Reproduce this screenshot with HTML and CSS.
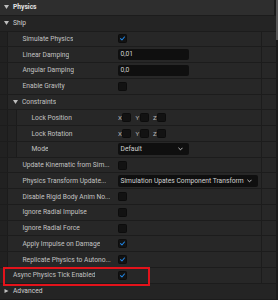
FILE: index.html
```html
<!DOCTYPE html>
<html>
<head>
<meta charset="utf-8">
<link rel="stylesheet" href="styles.css">
</head>
<body>
<div class="panel">
  <div class="content">
    <div class="row cat"><svg class="tri" viewBox="0 0 5 4"><polygon points="0,0 5,0 2.5,4"/></svg><span>Physics</span></div>
    <div class="row group"><svg class="tri" viewBox="0 0 5 4"><polygon points="0,0 5,0 2.5,4"/></svg><span>Ship</span></div>

    <div class="prop">
      <div class="name-cell"><div class="band"></div><span class="label">Simulate Physics</span></div>
      <div class="val"><span class="cb"><svg viewBox="0 0 9 9"><polyline points="2,4.7 3.8,6.4 7,2.6"/></svg></span></div>
      <div class="reset"></div>
    </div>
    <div class="prop">
      <div class="name-cell"><div class="band"></div><span class="label">Linear Damping</span></div>
      <div class="val"><span class="input">0,01</span></div>
      <div class="reset"></div>
    </div>
    <div class="prop">
      <div class="name-cell"><div class="band"></div><span class="label">Angular Damping</span></div>
      <div class="val"><span class="input">0,0</span></div>
      <div class="reset"></div>
    </div>
    <div class="prop">
      <div class="name-cell"><div class="band"></div><span class="label">Enable Gravity</span></div>
      <div class="val"><span class="cb"></span></div>
      <div class="reset"></div>
    </div>
    <div class="prop">
      <div class="name-cell"><div class="band"></div><span class="label sub"><svg class="tri" viewBox="0 0 5 4"><polygon points="0,0 5,0 2.5,4"/></svg>Constraints</span></div>
      <div class="val"></div>
      <div class="reset"></div>
    </div>
    <div class="prop">
      <div class="name-cell"><div class="band"></div><div class="band band2"></div><span class="label">Lock Position</span></div>
      <div class="val"><span class="axis">X</span><span class="cb"></span><span class="axis ax-gap">Y</span><span class="cb"></span><span class="axis ax-gap">Z</span><span class="cb"></span></div>
      <div class="reset"></div>
    </div>
    <div class="prop">
      <div class="name-cell"><div class="band"></div><div class="band band2"></div><span class="label">Lock Rotation</span></div>
      <div class="val"><span class="axis">X</span><span class="cb"></span><span class="axis ax-gap">Y</span><span class="cb"></span><span class="axis ax-gap">Z</span><span class="cb"></span></div>
      <div class="reset"></div>
    </div>
    <div class="prop">
      <div class="name-cell"><div class="band"></div><div class="band band2"></div><span class="label">Mode</span></div>
      <div class="val"><span class="combo"><span>Default</span><svg class="chev" viewBox="0 0 6 4"><polyline points="0.5,0.5 3,3 5.5,0.5"/></svg></span></div>
      <div class="reset"></div>
    </div>
    <div class="prop">
      <div class="name-cell"><div class="band"></div><span class="label">Update Kinematic from Sim...</span></div>
      <div class="val"><span class="cb"></span></div>
      <div class="reset"></div>
    </div>
    <div class="prop">
      <div class="name-cell"><div class="band"></div><span class="label">Physics Transform Update...</span></div>
      <div class="val"><span class="combo wide"><span>Simulation Upates Component Transform</span><svg class="chev" viewBox="0 0 6 4"><polyline points="0.5,0.5 3,3 5.5,0.5"/></svg></span></div>
      <div class="reset"></div>
    </div>
    <div class="prop">
      <div class="name-cell"><div class="band"></div><span class="label">Disable Rigid Body Anim No...</span></div>
      <div class="val"><span class="cb"></span></div>
      <div class="reset"></div>
    </div>
    <div class="prop">
      <div class="name-cell"><div class="band"></div><span class="label">Ignore Radial Impulse</span></div>
      <div class="val"><span class="cb"></span></div>
      <div class="reset"></div>
    </div>
    <div class="prop">
      <div class="name-cell"><div class="band"></div><span class="label">Ignore Radial Force</span></div>
      <div class="val"><span class="cb"></span></div>
      <div class="reset"></div>
    </div>
    <div class="prop">
      <div class="name-cell"><div class="band"></div><span class="label">Apply Impulse on Damage</span></div>
      <div class="val"><span class="cb"><svg viewBox="0 0 9 9"><polyline points="2,4.7 3.8,6.4 7,2.6"/></svg></span></div>
      <div class="reset"></div>
    </div>
    <div class="prop">
      <div class="name-cell"><div class="band"></div><span class="label">Replicate Physics to Autono...</span></div>
      <div class="val"><span class="cb"><svg viewBox="0 0 9 9"><polyline points="2,4.7 3.8,6.4 7,2.6"/></svg></span></div>
      <div class="reset"></div>
    </div>
    <div class="prop">
      <div class="name-cell"><span class="label top">Async Physics Tick Enabled</span></div>
      <div class="val"><span class="cb"><svg viewBox="0 0 9 9"><polyline points="2,4.7 3.8,6.4 7,2.6"/></svg></span></div>
      <div class="reset"></div>
    </div>
    <div class="row group"><svg class="tri" viewBox="0 0 5 4"><polygon points="0.5,0 4.5,2 0.5,4"/></svg><span>Advanced</span></div>
  </div>
  <div class="scroll"><div class="thumb"></div></div>
  <div class="highlight"></div>
</div>
</body>
</html>
```

FILE: styles.css
```css
html, body {
  margin: 0;
  padding: 0;
  background: #1b1b1b;
}

body {
  font-family: Roboto, "Liberation Sans", sans-serif;
  font-size: 6.7px;
  color: #c2c2c2;
  overflow: hidden;
}

.panel {
  position: relative;
  display: flex;
  width: 278px;
  height: 300px;
  overflow: hidden;
}

.content {
  width: 276px;
  flex: none;
}

.scroll {
  width: 2px;
  flex: none;
  background: #1b1b1b;
}

.thumb {
  height: 40px;
  background: #575757;
}

.row {
  height: 15.78px;
  box-sizing: border-box;
  border-bottom: 1px solid #1c1c1c;
  display: flex;
  align-items: center;
  padding-left: 4px;
}

.tri {
  width: 5px;
  height: 4px;
  margin-right: 4px;
  flex: none;
  fill: #bdbdbd;
}

.cat {
  background: #2e2e2e;
  margin-right: 2px;
  color: #e4e4e4;
  font-weight: 700;
}

.group {
  background: #242424;
  color: #cfcfcf;
}

.prop {
  height: 15.78px;
  box-sizing: border-box;
  border-bottom: 1px solid #1c1c1c;
  background: #272727;
  display: grid;
  grid-template-columns: 115px 146px 1fr;
}

.name-cell {
  display: flex;
  align-items: center;
  min-width: 0;
  overflow: hidden;
}

.band {
  width: 8px;
  align-self: stretch;
  flex: none;
  box-sizing: border-box;
  background: #212121;
  border-right: 1px solid #1b1b1b;
}

.band2 {
  width: 9px;
  background: #232323;
}

.label {
  padding-left: 14.5px;
  white-space: nowrap;
  overflow: hidden;
}

.label.sub {
  padding-left: 5px;
  display: flex;
  align-items: center;
}

.label.top {
  padding-left: 13px;
}

.val {
  display: flex;
  align-items: center;
  padding-left: 3px;
}

.reset {
  border-left: 1px solid #1c1c1c;
}

.cb {
  width: 9px;
  height: 9px;
  box-sizing: border-box;
  border-radius: 1.5px;
  background: #121212;
  border: 1px solid #0c0c0c;
  flex: none;
  display: flex;
}

.cb svg {
  width: 7px;
  height: 7px;
  fill: none;
  stroke: #1f86e6;
  stroke-width: 1.4;
  stroke-linecap: round;
  stroke-linejoin: round;
}

.input {
  width: 71px;
  height: 11px;
  box-sizing: border-box;
  background: #0f0f0f;
  border-radius: 2px;
  padding-left: 2.5px;
  line-height: 11px;
  color: #d2d2d2;
}

.axis {
  width: 3.5px;
  color: #b4b4b4;
  font-size: 6.2px;
}

.axis + .cb {
  margin-left: 0.5px;
}

.ax-gap {
  margin-left: 4.5px;
}

.combo {
  width: 71px;
  height: 12px;
  box-sizing: border-box;
  background: #0f0f0f;
  border-radius: 2px;
  padding-left: 2.5px;
  display: flex;
  align-items: center;
  color: #d0d0d0;
  white-space: nowrap;
  overflow: hidden;
}

.combo.wide {
  width: 140px;
}

.chev {
  width: 5px;
  height: 4px;
  margin-left: auto;
  margin-right: 6px;
  flex: none;
  fill: none;
  stroke: #cfcfcf;
  stroke-width: 1.1;
}

.highlight {
  position: absolute;
  left: 3px;
  top: 267px;
  width: 147px;
  height: 19px;
  box-sizing: border-box;
  border: 2px solid #e3131b;
  pointer-events: none;
}
```
